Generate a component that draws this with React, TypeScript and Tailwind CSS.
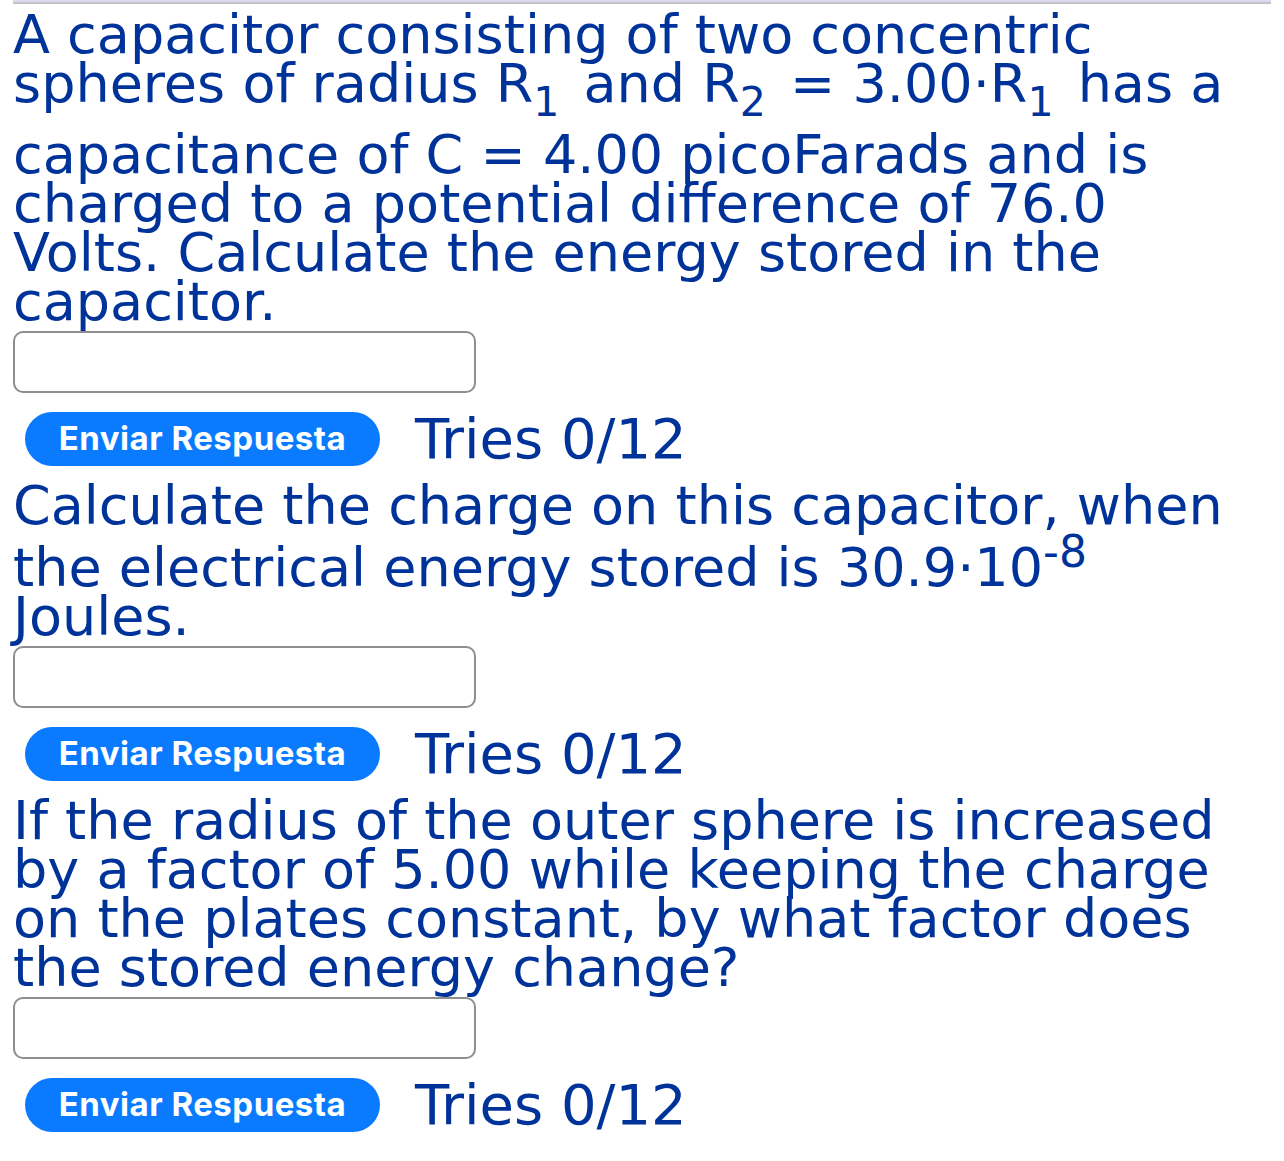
export default function App() {
  const sub = "mr-[7px] align-[-14px] text-[41px] leading-[56px]"
  const body = "text-[54px] leading-[49px] text-[#003399]"

  const Answer = () => (
    <>
      <div className="mt-[5px] h-[62px] w-[463px] rounded-[10px] border-2 border-[#8e8e8e] bg-white" />
      <div className="mt-[19px] flex h-[54px] items-center">
        <button className="ml-[12px] flex h-[54px] w-[355px] items-center justify-center rounded-full bg-[#0a7bff] text-[33px] font-bold tracking-[0.5px] text-white [font-family:Inter,'Noto_Sans',sans-serif]">
          Enviar Respuesta
        </button>
        <span className="ml-[35px] text-[56px] leading-[54px] text-[#003399]">Tries 0/12</span>
      </div>
    </>
  )

  return (
    <div className="min-h-screen bg-white [font-family:'DejaVu_Sans',Verdana,sans-serif]">
      <div className="ml-[13px] w-[1258px]">
        <div className="h-[2px] bg-[#d9d9f0]" />
        <div className="h-[2px] bg-[#c4c4c4]" />

        <p className={`mt-[6px] ${body}`}>
          A capacitor consisting of two concentric spheres of radius R<span className={sub}>1</span> and R
          <span className={sub}>2</span> = 3.00·R<span className={sub}>1</span> has a capacitance of C = 4.00
          picoFarads and is charged to a potential difference of 76.0 Volts. Calculate the energy stored in the
          capacitor.
        </p>
        <Answer />

        <p className={`mt-[15px] ${body}`}>
          Calculate the charge on this capacitor, when the electrical energy stored is 30.9·10
          <span className="align-[19px] text-[44px] leading-[44px]">-8</span> Joules.
        </p>
        <Answer />

        <p className={`mt-[15px] ${body}`}>
          If the radius of the outer sphere is increased by a factor of 5.00 while keeping the charge on the
          plates constant, by what factor does the stored energy change?
        </p>
        <Answer />
      </div>
    </div>
  )
}
